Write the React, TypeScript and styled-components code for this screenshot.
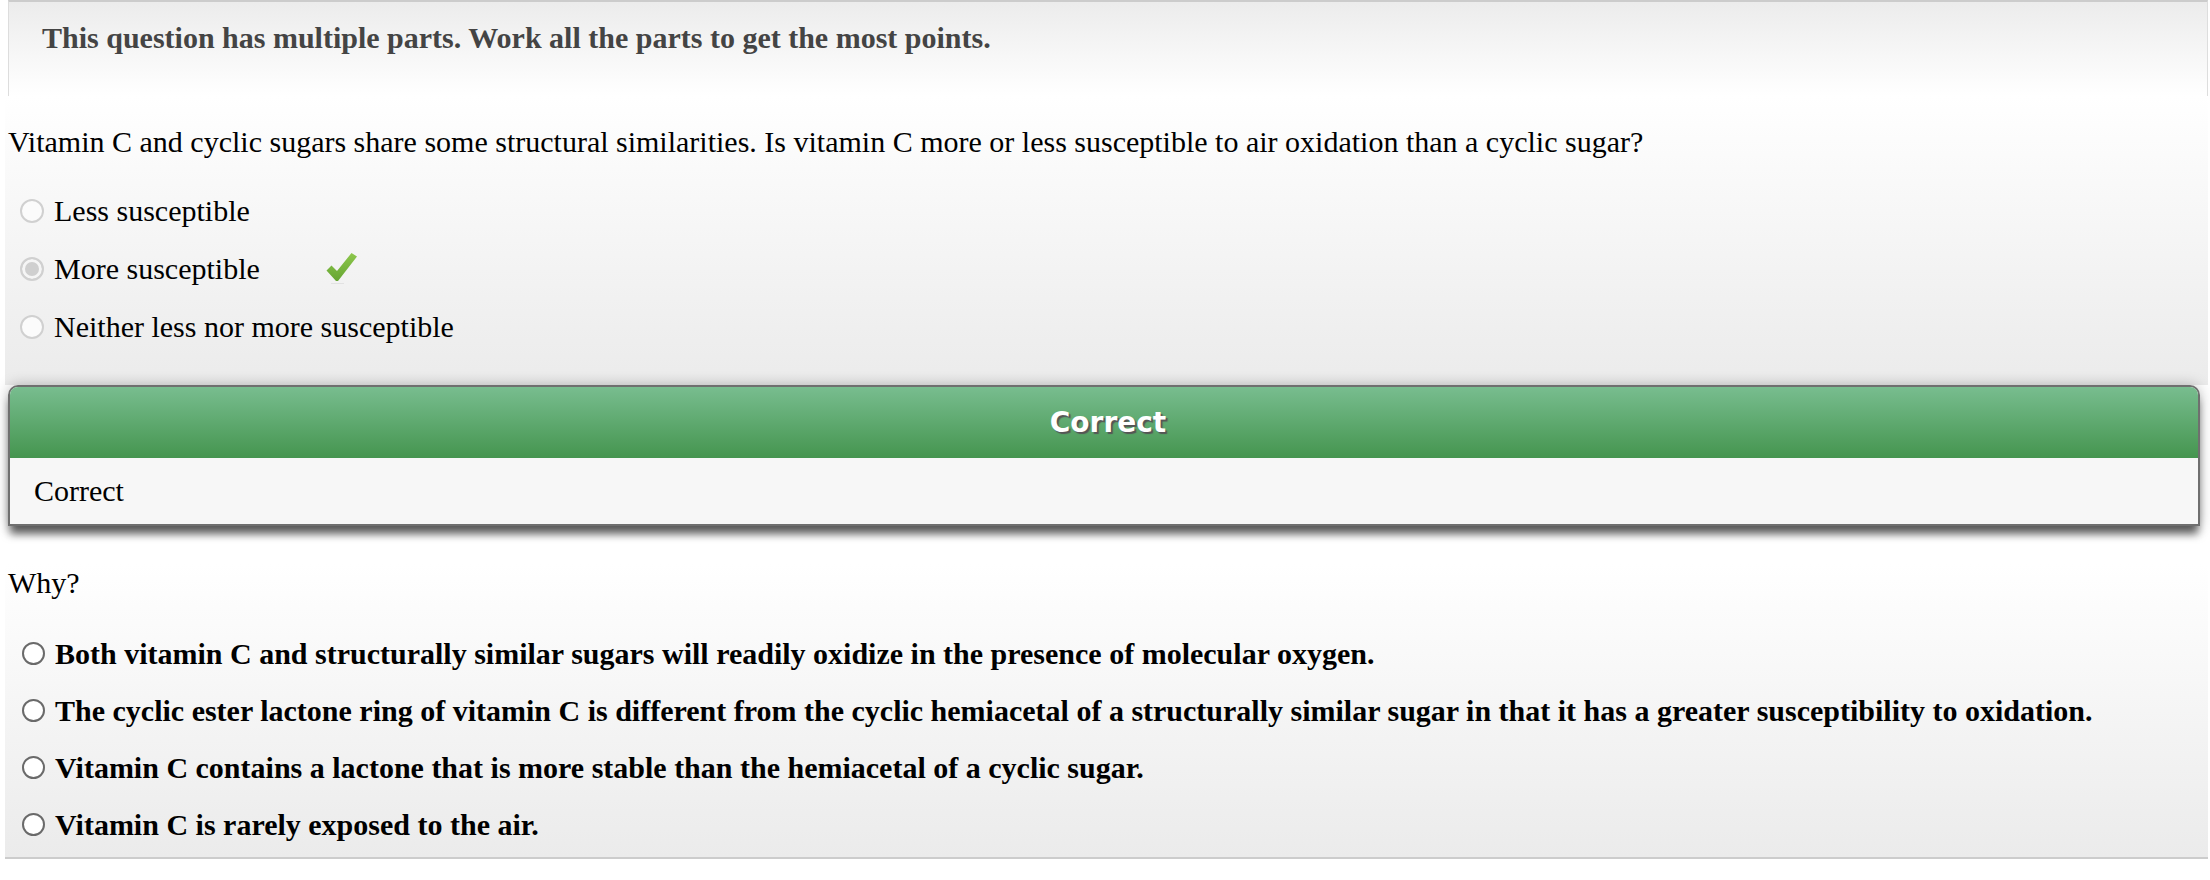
import styled, { createGlobalStyle } from "styled-components";

const GlobalStyle = createGlobalStyle`
  body {
    margin: 0;
    background: #ffffff;
    font-family: "Liberation Serif", "Times New Roman", serif;
    color: #000;
  }
`;

type RadioKind = "disabled" | "selected" | "open";

interface IChoice {
    label: string;
    kind: RadioKind;
    correct?: boolean;
}

const firstChoices: IChoice[] = [
    { label: "Less susceptible", kind: "disabled" },
    { label: "More susceptible", kind: "selected", correct: true },
    { label: "Neither less nor more susceptible", kind: "disabled" },
];

const whyChoices: IChoice[] = [
    { label: "Both vitamin C and structurally similar sugars will readily oxidize in the presence of molecular oxygen.", kind: "open" },
    { label: "The cyclic ester lactone ring of vitamin C is different from the cyclic hemiacetal of a structurally similar sugar in that it has a greater susceptibility to oxidation.", kind: "open" },
    { label: "Vitamin C contains a lactone that is more stable than the hemiacetal of a cyclic sugar.", kind: "open" },
    { label: "Vitamin C is rarely exposed to the air.", kind: "open" },
];

const CheckMark = () => (
    <CheckIcon width="32" height="32" viewBox="0 0 32 32">
        <defs>
            <linearGradient id="chk" x1="0" y1="0" x2="0" y2="1">
                <stop offset="0" stopColor="#8dc74c" />
                <stop offset="1" stopColor="#66a532" />
            </linearGradient>
        </defs>
        <path d="M0.5 18.5 L5.5 13.5 L11 19 L25.5 1 L31 4.5 L12 29 L10 29 Z" fill="url(#chk)" />
        <line x1="5" y1="31.5" x2="18" y2="31.5" stroke="#e2e2e2" strokeWidth="1" />
    </CheckIcon>
);

export default function App() {
    return (
        <>
            <GlobalStyle />
            <Page>
                <Intro>This question has multiple parts. Work all the parts to get the most points.</Intro>
                <Part $top={29} $bottom={29}>
                    <Prompt>Vitamin C and cyclic sugars share some structural similarities. Is vitamin C more or less susceptible to air oxidation than a cyclic sugar?</Prompt>
                    <Choices $gap={23}>
                        {firstChoices.map((c) => (
                            <Choice key={c.label} $height={58} $indent={15}>
                                <Radio $kind={c.kind} />
                                <ChoiceText>{c.label}</ChoiceText>
                                {c.correct && <CheckMark />}
                            </Choice>
                        ))}
                    </Choices>
                </Part>
                <Feedback>
                    <FeedbackHead>Correct</FeedbackHead>
                    <FeedbackBody>Correct</FeedbackBody>
                </Feedback>
                <Part $top={2} $bottom={4} $spaced $ruled>
                    <Prompt>Why?</Prompt>
                    <Choices $gap={25}>
                        {whyChoices.map((c) => (
                            <Choice key={c.label} $height={57} $indent={17}>
                                <Radio $kind={c.kind} />
                                <ChoiceText $bold>{c.label}</ChoiceText>
                            </Choice>
                        ))}
                    </Choices>
                </Part>
            </Page>
        </>
    );
}

const Page = styled.div`
    padding: 0 2px 20px 5px;
`;

const Intro = styled.div`
    margin-left: 3px;
    box-sizing: border-box;
    height: 96px;
    padding: 19px 0 0 33px;
    border-top: 2px solid #cccccc;
    border-left: 1px solid #dddddd;
    border-right: 1px solid #dddddd;
    background: linear-gradient(#ececec, #ffffff);
    font-size: 30px;
    line-height: 34px;
    font-weight: bold;
    color: #444444;
`;

const Part = styled.div<{ $top: number; $bottom: number; $spaced?: boolean; $ruled?: boolean }>`
    padding: ${(p) => p.$top}px 0 ${(p) => p.$bottom}px 0;
    margin-top: ${(p) => (p.$spaced ? "38px" : "0")};
    background: linear-gradient(#ffffff, #ebebeb);
    border-bottom: ${(p) => (p.$ruled ? "2px solid #cccccc" : "none")};
`;

const Prompt = styled.div`
    padding-left: 3px;
    font-size: 30px;
    line-height: 34px;
`;

const Choices = styled.div<{ $gap: number }>`
    margin-top: ${(p) => p.$gap}px;
    display: flex;
    flex-direction: column;
`;

const Choice = styled.div<{ $height: number; $indent: number }>`
    height: ${(p) => p.$height}px;
    display: flex;
    align-items: center;
    padding-left: ${(p) => p.$indent}px;
`;

const Radio = styled.span<{ $kind: RadioKind }>`
    flex: none;
    box-sizing: border-box;
    width: ${(p) => (p.$kind === "open" ? "23px" : "24px")};
    height: ${(p) => (p.$kind === "open" ? "23px" : "24px")};
    border-radius: 50%;
    margin-right: ${(p) => (p.$kind === "open" ? "10px" : "10px")};
    border: ${(p) => (p.$kind === "open" ? "2px solid #6a6a6a" : "2px solid #d0d0d0")};
    background: ${(p) => (p.$kind === "selected" ? "#cfcfcf" : p.$kind === "open" ? "#ffffff" : "#fbfbfb")};
    box-shadow: ${(p) => (p.$kind === "selected" ? "inset 0 0 0 3px #f5f5f5" : "none")};
`;

const ChoiceText = styled.span<{ $bold?: boolean }>`
    font-size: 30px;
    line-height: 34px;
    font-weight: ${(p) => (p.$bold ? "bold" : "normal")};
    white-space: nowrap;
`;

const CheckIcon = styled.svg`
    margin-left: 66px;
    margin-top: -2px;
`;

const Feedback = styled.div`
    margin: 0 8px 0 3px;
    border: 2px solid #6f6f6f;
    border-radius: 10px 10px 0 0;
    overflow: hidden;
    box-shadow: 0 10px 8px -2px rgba(0, 0, 0, 0.6), 0 0 14px rgba(0, 0, 0, 0.25);
`;

const FeedbackHead = styled.div`
    height: 71px;
    display: flex;
    align-items: center;
    justify-content: center;
    padding-left: 8px;
    background: linear-gradient(#78bd8f, #45954f);
    font-family: "DejaVu Sans", Verdana, sans-serif;
    font-weight: bold;
    font-size: 28px;
    color: #ffffff;
    text-shadow: 2px 2px 1px #555555;
`;

const FeedbackBody = styled.div`
    height: 66px;
    display: flex;
    align-items: center;
    padding-left: 24px;
    background: #f7f7f7;
    font-size: 30px;
`;
